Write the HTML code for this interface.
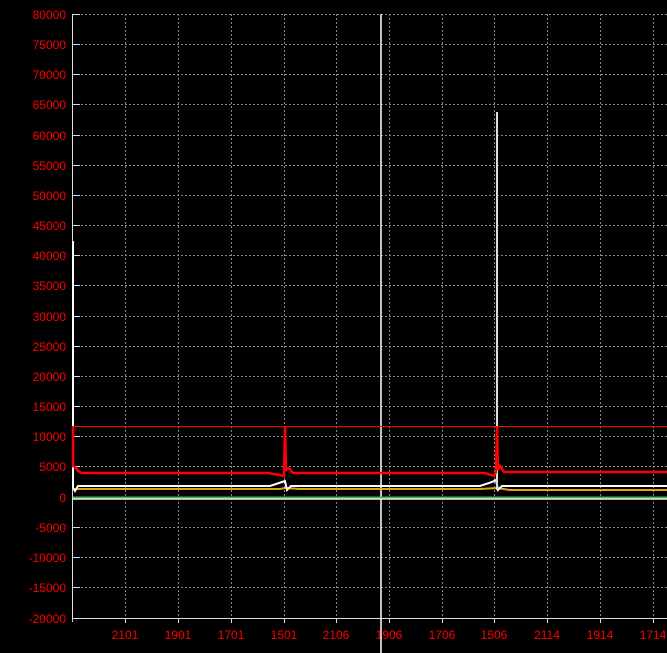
<!DOCTYPE html>
<html><head><style>html,body{margin:0;padding:0;background:#000;width:667px;height:653px;overflow:hidden}
text{font-family:"Liberation Sans",sans-serif;font-size:12px;fill:#f00}</style></head><body>
<svg width="667" height="653" xmlns="http://www.w3.org/2000/svg">
<rect width="667" height="653" fill="#000"/>
<g stroke="#888" stroke-width="1" stroke-dasharray="2,2">
<line x1="73" y1="14.5" x2="667" y2="14.5"/><line x1="73" y1="44.5" x2="667" y2="44.5"/><line x1="73" y1="74.5" x2="667" y2="74.5"/><line x1="73" y1="104.5" x2="667" y2="104.5"/><line x1="73" y1="135.5" x2="667" y2="135.5"/><line x1="73" y1="165.5" x2="667" y2="165.5"/><line x1="73" y1="195.5" x2="667" y2="195.5"/><line x1="73" y1="225.5" x2="667" y2="225.5"/><line x1="73" y1="255.5" x2="667" y2="255.5"/><line x1="73" y1="285.5" x2="667" y2="285.5"/><line x1="73" y1="316.5" x2="667" y2="316.5"/><line x1="73" y1="346.5" x2="667" y2="346.5"/><line x1="73" y1="376.5" x2="667" y2="376.5"/><line x1="73" y1="406.5" x2="667" y2="406.5"/><line x1="73" y1="436.5" x2="667" y2="436.5"/><line x1="73" y1="466.5" x2="667" y2="466.5"/><line x1="73" y1="497.5" x2="667" y2="497.5"/><line x1="73" y1="527.5" x2="667" y2="527.5"/><line x1="73" y1="557.5" x2="667" y2="557.5"/><line x1="73" y1="587.5" x2="667" y2="587.5"/>
<line x1="125.5" y1="14" x2="125.5" y2="618"/><line x1="178.5" y1="14" x2="178.5" y2="618"/><line x1="231.5" y1="14" x2="231.5" y2="618"/><line x1="284.5" y1="14" x2="284.5" y2="618"/><line x1="336.5" y1="14" x2="336.5" y2="618"/><line x1="389.5" y1="14" x2="389.5" y2="618"/><line x1="442.5" y1="14" x2="442.5" y2="618"/><line x1="494.5" y1="14" x2="494.5" y2="618"/><line x1="547.5" y1="14" x2="547.5" y2="618"/><line x1="600.5" y1="14" x2="600.5" y2="618"/><line x1="653.5" y1="14" x2="653.5" y2="618"/>
</g>
<g stroke="#ddd" stroke-width="1">
<line x1="72.5" y1="14" x2="72.5" y2="622"/><line x1="72" y1="618.5" x2="667" y2="618.5"/>
<path d="M72 14.5h8M72 44.5h8M72 74.5h8M72 104.5h8M72 135.5h8M72 165.5h8M72 195.5h8M72 225.5h8M72 255.5h8M72 285.5h8M72 316.5h8M72 346.5h8M72 376.5h8M72 406.5h8M72 436.5h8M72 466.5h8M72 497.5h8M72 527.5h8M72 557.5h8M72 587.5h8M72 618.5h8"/>
<path d="M125.5 618v5M178.5 618v5M231.5 618v5M284.5 618v5M336.5 618v5M389.5 618v5M442.5 618v5M494.5 618v5M547.5 618v5M600.5 618v5M653.5 618v5"/>
</g>
<g text-anchor="end">
<text x="66" y="19">80000</text><text x="66" y="49">75000</text><text x="66" y="79">70000</text><text x="66" y="109">65000</text><text x="66" y="140">60000</text><text x="66" y="170">55000</text><text x="66" y="200">50000</text><text x="66" y="230">45000</text><text x="66" y="260">40000</text><text x="66" y="290">35000</text><text x="66" y="321">30000</text><text x="66" y="351">25000</text><text x="66" y="381">20000</text><text x="66" y="411">15000</text><text x="66" y="441">10000</text><text x="66" y="471">5000</text><text x="66" y="502">0</text><text x="66" y="532">-5000</text><text x="66" y="562">-10000</text><text x="66" y="592">-15000</text><text x="66" y="623">-20000</text>
</g>
<g text-anchor="middle">
<text x="125" y="639">2101</text><text x="178" y="639">1901</text><text x="231" y="639">1701</text><text x="284" y="639">1501</text><text x="336" y="639">2106</text><text x="389" y="639">1906</text><text x="442" y="639">1706</text><text x="494" y="639">1506</text><text x="547" y="639">2114</text><text x="600" y="639">1914</text><text x="653" y="639">1714</text>
</g>
<line x1="381" y1="14" x2="381" y2="653" stroke="#fff" stroke-width="1.5"/>
<line x1="73" y1="426.5" x2="667" y2="426.5" stroke="#f00" stroke-width="1"/>
<path d="M73 497.5H667" stroke="#4caf50" stroke-width="2"/>
<path d="M73 499H667" stroke="#eee" stroke-width="1.5"/>
<path d="M74 489H280L285 488L300 489H480L497 488L510 490H667" stroke="#e8a010" stroke-width="2" fill="none"/>
<path d="M73 241V488L75 491L78 486H270L282 482L285 481L287 490L291 486H480L492 482L496 480L498 490L502 486H667" stroke="#fff" stroke-width="2" fill="none"/>
<line x1="497" y1="112" x2="497" y2="490" stroke="#ddd" stroke-width="2"/>
<path d="M73 426V466L76 468L78 471L82 473H268L280 475L284 476L285 426L286 470L289 468L293 473H485L494 476L496 472L497 426L498 470L500 466L504 472H667" stroke="#f00" stroke-width="2.5" fill="none"/>
</svg>
</body></html>
